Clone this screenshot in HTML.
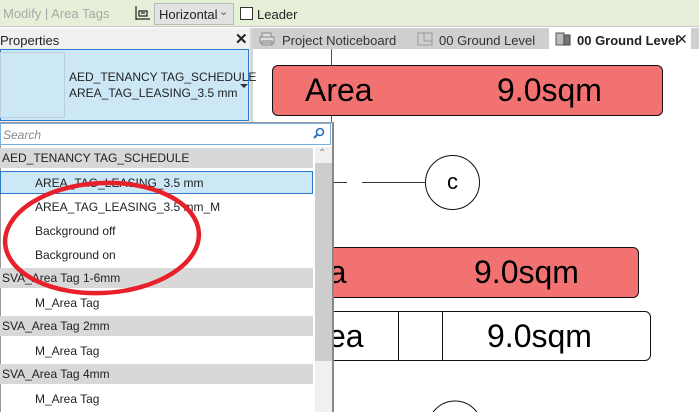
<!DOCTYPE html><html><head><style>
html,body{margin:0;width:699px;height:413px;overflow:hidden}
body{position:relative;font-family:"Liberation Sans",sans-serif;background:#fff}
div{position:absolute;box-sizing:border-box}
.t{font-size:12px;color:#222;white-space:nowrap}
.row{left:0;width:313px;height:20px;font-size:12px;line-height:20px;white-space:nowrap;color:#222}
.h{background:#d8d8d8;padding-left:2px}
.i{padding-left:35px}
.tag{border:1.5px solid #111;border-radius:6px;font-size:32px;color:#000;overflow:hidden}
</style></head><body>
<div style="left:0;top:0;width:699px;height:27px;background:#e6f0d8;border-bottom:1px solid #c8c8c8"></div>
<div class="t" style="left:3px;top:6px;font-size:13px;color:#a8a8a8">Modify | Area Tags</div>
<svg style="position:absolute;left:134px;top:5px" width="18" height="16"><path d="M2 1v14M2 14h14M5 6h8v5H5zM7 8h4" stroke="#222" fill="none" stroke-width="1.2"/></svg>
<div style="left:154px;top:3px;width:80px;height:22px;background:#e2e2e2;border:1px solid #bbb"></div>
<div class="t" style="left:159px;top:7px;font-size:13px">Horizontal</div>
<div class="t" style="left:219px;top:5px;font-size:11px;color:#555">&#8964;</div>
<div style="left:240px;top:7px;width:13px;height:13px;border:1px solid #333;background:#fff"></div>
<div class="t" style="left:257px;top:7px;font-size:13px">Leader</div>
<div style="left:0;top:28px;width:250px;height:384px;background:#f0f0f0"></div>
<div class="t" style="left:0;top:33px;font-size:13px">Properties</div>
<div class="t" style="left:235px;top:30px;font-size:15px;font-weight:bold">&#x2715;</div>
<div style="left:250px;top:28px;width:3px;height:384px;background:#d6d6d6"></div>
<div style="left:253px;top:28px;width:446px;height:21px;background:#cfcfcf"></div>
<svg style="position:absolute;left:259px;top:32px" width="16" height="14"><path d="M3 1h9v4H3zM1 5h14v6H1zM3 9h10v4H3z" stroke="#888" fill="#ddd"/></svg>
<div class="t" style="left:282px;top:33px;font-size:13px;color:#333">Project Noticeboard</div>
<svg style="position:absolute;left:417px;top:32px" width="16" height="14"><path d="M1 1h14v12H1zM7 1v8h8" stroke="#999" fill="none"/></svg>
<div class="t" style="left:439px;top:33px;font-size:13px;color:#333">00 Ground Level</div>
<div style="left:549px;top:28px;width:142px;height:21px;background:#fff"></div>
<svg style="position:absolute;left:555px;top:32px" width="16" height="14"><path d="M1 1h8v12H1z" fill="#bbb" stroke="#555"/><path d="M9 3h6v10H9z" fill="#777" stroke="#444"/></svg>
<div class="t" style="left:577px;top:33px;font-size:13px;font-weight:bold">00 Ground Level</div>
<div class="t" style="left:676px;top:31px;font-size:14px">&#x2715;</div>
<div style="left:0;top:49px;width:249px;height:72px;background:#cce8f7;border:1.5px solid #2a78c8"></div>
<div style="left:0;top:52px;width:65px;height:66px;border:1px solid #bcd0dc"></div>
<div class="t" style="left:69px;top:70px">AED_TENANCY TAG_SCHEDULE</div>
<div class="t" style="left:69px;top:86px">AREA_TAG_LEASING_3.5 mm</div>
<div style="left:240px;top:84px;border:4px solid transparent;border-top:4px solid #333"></div>
<div style="left:331px;top:49px;width:1px;height:80px;background:#7a2ad0"></div>
<div class="tag" style="left:272px;top:65px;width:391px;height:51px;background:#f27272"><span style="position:absolute;left:32px;top:6px">Area</span><span style="position:absolute;left:224px;top:6px">9.0sqm</span></div>
<div style="left:333px;top:182px;width:14px;height:1px;background:#333"></div>
<div style="left:362px;top:182px;width:64px;height:1px;background:#333"></div>
<div style="left:425px;top:155px;width:55px;height:55px;border:1px solid #111;border-radius:50%;font-size:22px;text-align:center;line-height:52px">c</div>
<div class="tag" style="left:270px;top:247px;width:369px;height:51px;background:#f27272"><span style="position:absolute;left:8px;top:6px">Area</span><span style="position:absolute;left:203px;top:6px">9.0sqm</span></div>
<div class="tag" style="left:270px;top:311px;width:381px;height:50px;background:#fff"><span style="position:absolute;left:25px;top:6px">Area</span><span style="position:absolute;left:216px;top:6px">9.0sqm</span></div>
<div style="left:398px;top:311px;width:1px;height:50px;background:#111"></div>
<div style="left:442px;top:311px;width:1px;height:50px;background:#111"></div>
<svg style="position:absolute;left:425px;top:398px" width="60" height="14"><circle cx="30" cy="30" r="27" fill="none" stroke="#111"/></svg>
<div style="left:0;top:122px;width:334px;height:290px;background:#fff;border:1px solid #999;border-right:2px solid #888;border-bottom:none"></div>
<div style="left:0;top:123px;width:331px;height:22px;border:1px solid #7ab0e0;background:#fff"></div>
<div class="t" style="left:3px;top:128px;font-style:italic;color:#888">Search</div>
<svg style="position:absolute;left:312px;top:127px" width="14" height="14"><circle cx="8" cy="5" r="3.5" stroke="#2a70c0" stroke-width="1.6" fill="none"/><path d="M5.5 7.5L2 11" stroke="#2a70c0" stroke-width="2"/></svg>
<div style="left:315px;top:147px;width:17px;height:265px;background:#f0f0f0"></div>
<div class="t" style="left:318px;top:148px;font-size:10px;color:#888">&#8963;</div>
<div style="left:315px;top:163px;width:17px;height:198px;background:#cdcdcd"></div>
<div class="row h" style="top:148px">AED_TENANCY TAG_SCHEDULE</div>
<div class="row i" style="top:171px;height:23px;line-height:22px;background:#cce8f7;border:1px solid #2a78c8;padding-left:34px">AREA_TAG_LEASING_3.5 mm</div>
<div class="row i" style="top:197px">AREA_TAG_LEASING_3.5 mm_M</div>
<div class="row i" style="top:221px">Background off</div>
<div class="row i" style="top:245px">Background on</div>
<div class="row h" style="top:268px">SVA_Area Tag 1-6mm</div>
<div class="row i" style="top:293px">M_Area Tag</div>
<div class="row h" style="top:316px">SVA_Area Tag 2mm</div>
<div class="row i" style="top:341px">M_Area Tag</div>
<div class="row h" style="top:364px">SVA_Area Tag 4mm</div>
<div class="row i" style="top:389px;height:20px">M_Area Tag</div>
<svg style="position:absolute;left:0;top:0" width="699" height="412"><ellipse cx="102" cy="238" rx="97" ry="55" transform="rotate(-3 102 238)" fill="none" stroke="#e8202a" stroke-width="4.5"/></svg>
</body></html>
